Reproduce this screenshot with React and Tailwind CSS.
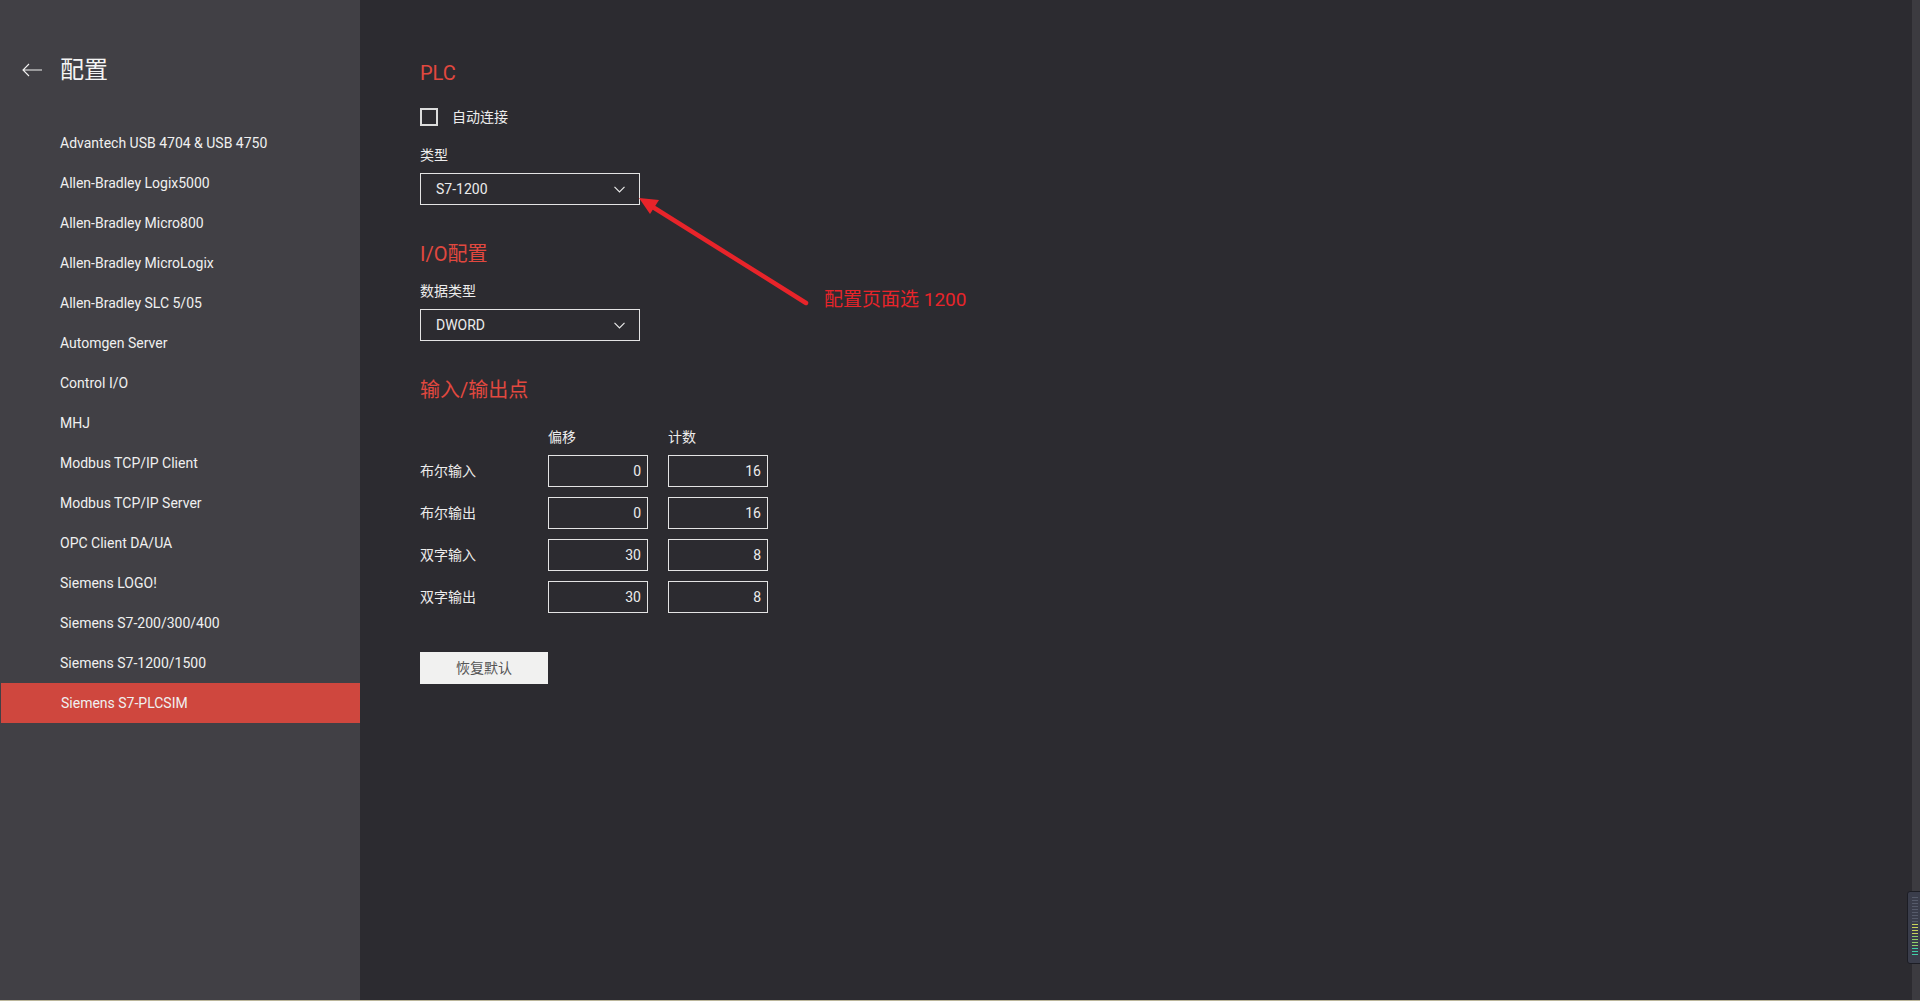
import React from "react";

const devices = [
  "Advantech USB 4704 & USB 4750",
  "Allen-Bradley Logix5000",
  "Allen-Bradley Micro800",
  "Allen-Bradley MicroLogix",
  "Allen-Bradley SLC 5/05",
  "Automgen Server",
  "Control I/O",
  "MHJ",
  "Modbus TCP/IP Client",
  "Modbus TCP/IP Server",
  "OPC Client DA/UA",
  "Siemens LOGO!",
  "Siemens S7-200/300/400",
  "Siemens S7-1200/1500",
  "Siemens S7-PLCSIM",
];

const ioRows = [
  { label: "布尔输入", offset: 0, count: 16 },
  { label: "布尔输出", offset: 0, count: 16 },
  { label: "双字输入", offset: 30, count: 8 },
  { label: "双字输出", offset: 30, count: 8 },
];

const Chevron = () => (
  <svg width="11" height="7" viewBox="0 0 11 7" fill="none">
    <path d="M0.5 0.8 L5.5 5.8 L10.5 0.8" stroke="#e8e8e8" strokeWidth="1.2" />
  </svg>
);

// dropdown like the UWP combo box
const Select = ({ value }) => (
  <div className="mt-[8px] flex h-[32px] w-[220px] items-center justify-between border border-[#e4e4e4] pl-[15px] pr-[14px] text-[14px] text-[#ececec]">
    <span>{value}</span>
    <Chevron />
  </div>
);

const Heading = ({ children, className }) => (
  <div className={`h-[28px] text-[20px] leading-[28px] text-[#e2483f] ${className}`}>{children}</div>
);

const Label = ({ children, className }) => (
  <div className={`h-[20px] text-[14px] leading-[20px] text-[#ececec] ${className}`}>{children}</div>
);

const Box = ({ children }) => (
  <div className="flex h-[32px] items-center justify-end border border-[#e4e4e4] pr-[6px] text-[14px] text-[#ececec]">
    {children}
  </div>
);

export default function App() {
  const selected = devices.length - 1;

  return (
    <div className="relative flex h-[1001px] w-[1920px] overflow-hidden bg-[#2c2b30] font-['Roboto','Noto_Sans_CJK_SC',sans-serif]">
      {/* sidebar */}
      <aside className="w-[360px] shrink-0 bg-[#414045] pt-[52px]">
        <div className="flex h-[36px] items-center">
          <svg className="ml-[22px]" width="20" height="14" viewBox="0 0 20 14" fill="none">
            <path d="M1 7 H20 M7 1 L1 7 L7 13" stroke="#f2f2f2" strokeWidth="1.1" />
          </svg>
          <span className="ml-[18px] text-[24px] leading-[36px] text-[#f4f4f4]">配置</span>
        </div>
        <ul className="mt-[35px]">
          {devices.map((d, i) => (
            <li
              key={d}
              className={`flex h-[40px] items-center pl-[60px] text-[14px] text-[#f0f0f0] ${
                i === selected ? "ml-px bg-[#cf473e]" : ""
              }`}
            >
              {d}
            </li>
          ))}
        </ul>
      </aside>

      {/* settings */}
      <main className="flex-1 pl-[60px] pt-[59px]">
        <Heading>PLC</Heading>

        <div className="mt-[21px] flex h-[18px] items-center">
          <div className="h-[18px] w-[18px] border-2 border-[#dcdcdc]" />
          <span className="ml-[14px] text-[14px] text-[#ececec]">自动连接</span>
        </div>

        <Label className="mt-[19px]">类型</Label>
        <Select value="S7-1200" />

        <Heading className="mt-[35px]">I/O配置</Heading>
        <Label className="mt-[13px]">数据类型</Label>
        <Select value="DWORD" />

        <Heading className="mt-[35px]">输入/输出点</Heading>

        <div className="mt-[23px] grid grid-cols-[108px_100px_100px] gap-x-[20px] gap-y-[10px]">
          <div className="h-[18px]" />
          <Label className="-mb-[2px]">偏移</Label>
          <Label className="-mb-[2px]">计数</Label>
          {ioRows.map((r) => (
            <React.Fragment key={r.label}>
              <div className="flex h-[32px] items-center whitespace-nowrap text-[14px] text-[#ececec]">{r.label}</div>
              <Box>{r.offset}</Box>
              <Box>{r.count}</Box>
            </React.Fragment>
          ))}
        </div>

        <button className="mt-[39px] h-[32px] w-[128px] bg-[#f1f1f0] text-[14px] text-[#555555]">恢复默认</button>
      </main>

      {/* right edge strip */}
      <div className="w-[8px] shrink-0 bg-[#3c3b40]" />

      {/* annotation arrow */}
      <svg className="absolute left-0 top-0" width="1920" height="1001" fill="none">
        <line x1="806" y1="303" x2="648" y2="204" stroke="#e8242a" strokeWidth="4.5" strokeLinecap="round" />
        <polygon points="639,198 659,200 650,214" fill="#e8242a" />
      </svg>
      <div className="absolute left-[824px] top-[286px] text-[19px] leading-[28px] text-[#e8242a]">配置页面选 1200</div>

      {/* volume meter overlay */}
      <div className="absolute left-[1907px] top-[891px] flex h-[73px] w-[16px] flex-col gap-[2px] rounded-[3px] border border-[#1c1d24] bg-[#3a3d4b] px-[4px] py-[5px]">
        {Array.from({ length: 20 }).map((_, i) => (
          <div
            key={i}
            className={`h-px w-full ${
              i < 9 ? "bg-[#555a6a]" : i < 13 ? "bg-[#c8d35a]" : i < 17 ? "bg-[#8fcf6a]" : "bg-[#3fcfa8]"
            }`}
          />
        ))}
      </div>

      {/* taskbar edge */}
      <div className="absolute bottom-0 left-0 h-px w-full bg-[#bcb79c]" />
    </div>
  );
}
